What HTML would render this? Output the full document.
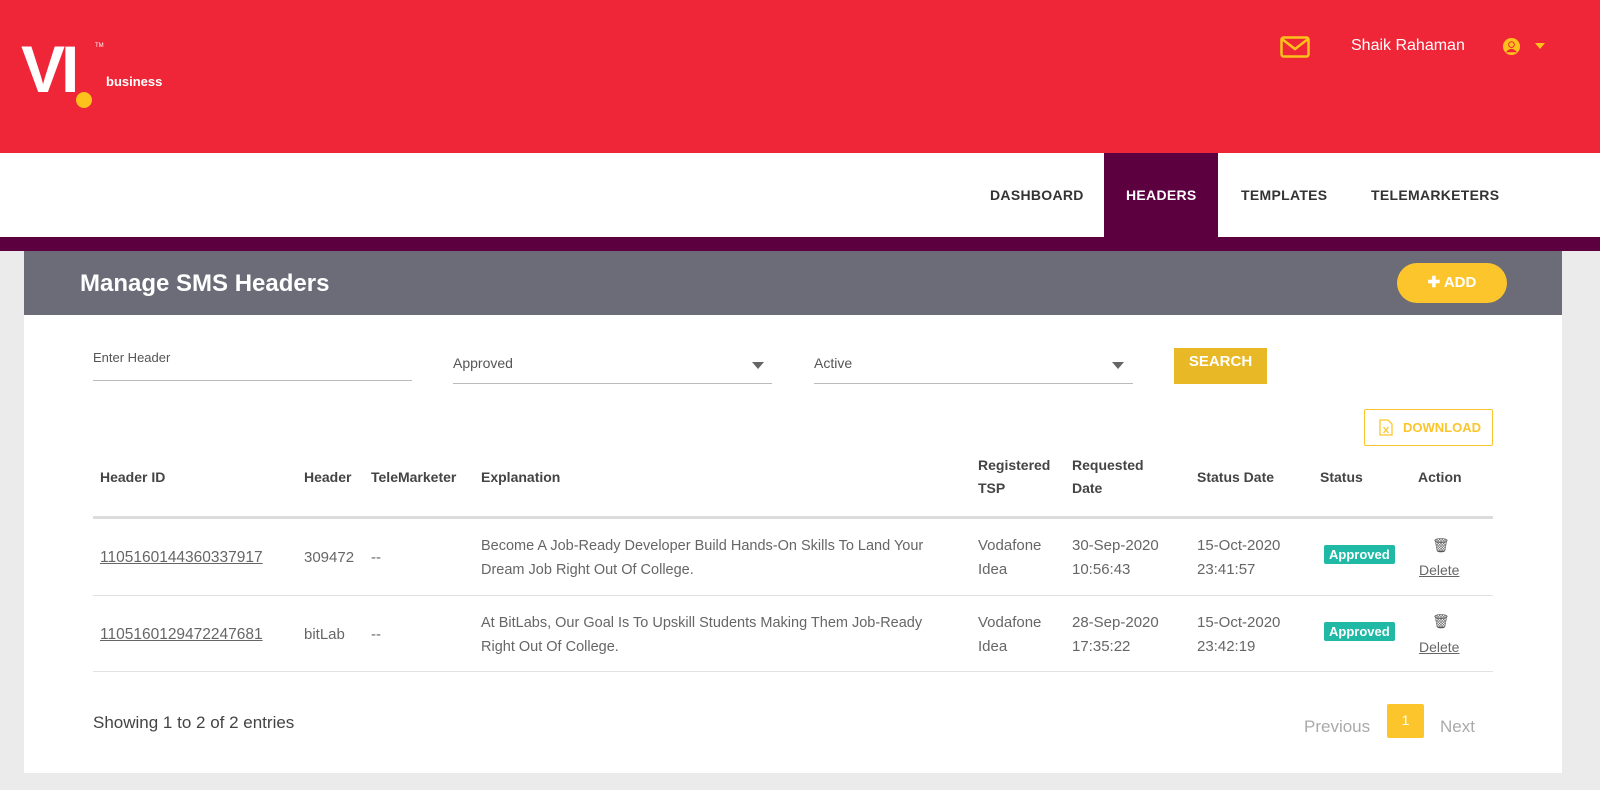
<!DOCTYPE html>
<html><head><meta charset="utf-8"><style>
*{margin:0;padding:0;box-sizing:border-box}
body{width:1600px;height:790px;overflow:hidden;background:#ebebeb;font-family:"Liberation Sans",sans-serif;position:relative;color:#555}
.abs{position:absolute}
#top{left:0;top:0;width:1600px;height:153px;background:#ef2637}
#nav{left:0;top:153px;width:1600px;height:84px;background:#fff}
#bar{left:0;top:237px;width:1600px;height:14px;background:#5d0040}
.nv{position:absolute;top:187px;font-weight:bold;font-size:14px;color:#333;letter-spacing:.3px}
#card{left:24px;top:251px;width:1538px;height:522px;background:#fff}
#ch{left:24px;top:251px;width:1538px;height:64px;background:#6b6c78}
.in{position:absolute;border-bottom:1px solid #bbb;font-size:14px;color:#555}
.th{position:absolute;font-weight:bold;font-size:14px;color:#444;line-height:23px}
.td{position:absolute;font-size:15px;color:#666;line-height:24px}
.badge{position:absolute;background:#1fb9a6;color:#fff;font-weight:bold;font-size:13px;padding:2px 5px;border-radius:2px}
.del{position:absolute;font-size:14px;color:#666;text-decoration:underline}
</style></head><body>
<div id="top" class="abs"></div>
<div class="abs" style="left:21px;top:40px;font-family:'Liberation Sans';font-weight:900;font-size:66px;color:#fff;letter-spacing:-4px;line-height:58px">VI</div>
<div class="abs" style="left:95px;top:43px;font-size:6px;color:#fff">TM</div>
<div class="abs" style="left:76px;top:92px;width:16px;height:16px;border-radius:50%;background:#fcc21b"></div>
<div class="abs" style="left:106px;top:74px;font-size:13px;font-weight:bold;color:#fff">business</div>
<svg class="abs" style="left:1280px;top:36px" width="30" height="22" viewBox="0 0 30 22"><rect x="1.5" y="1.5" width="27" height="19" rx="2" fill="none" stroke="#fcc21b" stroke-width="2.5"/><path d="M2 3 L15 13 L28 3" fill="none" stroke="#fcc21b" stroke-width="2.5"/></svg>
<div class="abs" style="left:1351px;top:37px;font-size:16px;color:#fff">Shaik Rahaman</div>
<svg class="abs" style="left:1502px;top:37px" width="19" height="19" viewBox="0 0 20 20"><circle cx="10" cy="10" r="9" fill="#fcc21b"/><circle cx="10" cy="8" r="3.5" fill="#ef2637"/><path d="M4 16 Q10 9 16 16" fill="#ef2637"/><circle cx="10" cy="8" r="2.5" fill="#fcc21b"/></svg>
<div class="abs" style="left:1535px;top:43px;width:0;height:0;border-left:5px solid transparent;border-right:5px solid transparent;border-top:6px solid #fcc21b"></div>
<div id="nav" class="abs"></div>
<div class="abs" style="left:1104px;top:153px;width:114px;height:84px;background:#5d0040"></div>
<div class="nv" style="left:990px">DASHBOARD</div>
<div class="nv" style="left:1126px;color:#fff">HEADERS</div>
<div class="nv" style="left:1241px">TEMPLATES</div>
<div class="nv" style="left:1371px">TELEMARKETERS</div>
<div id="bar" class="abs"></div>
<div id="card" class="abs"></div>
<div id="ch" class="abs"></div>
<div class="abs" style="left:80px;top:270px;font-size:24px;font-weight:bold;color:#fff">Manage SMS Headers</div>
<div class="abs" style="left:1397px;top:263px;width:110px;height:40px;border-radius:20px;background:#fcc52b;color:#fff;font-weight:bold;font-size:15px;line-height:40px;text-align:center">✚ ADD</div>
<div class="in" style="left:93px;top:350px;width:319px;height:31px;font-size:13px">Enter Header</div>
<div class="in" style="left:453px;top:355px;width:319px;height:29px">Approved</div>
<div class="abs" style="left:752px;top:362px;border-left:6px solid transparent;border-right:6px solid transparent;border-top:7px solid #666"></div>
<div class="in" style="left:814px;top:355px;width:319px;height:29px">Active</div>
<div class="abs" style="left:1112px;top:362px;border-left:6px solid transparent;border-right:6px solid transparent;border-top:7px solid #666"></div>
<div class="abs" style="left:1174px;top:348px;width:93px;height:36px;background:#e8b826;color:#fff;font-weight:bold;font-size:15px;text-align:center;line-height:28px">SEARCH</div>
<div class="abs" style="left:1364px;top:409px;width:129px;height:37px;border:1px solid #fcc52b;border-radius:2px;color:#fcc52b;font-weight:bold;font-size:13px;line-height:35px;padding-left:38px">DOWNLOAD</div>
<svg class="abs" style="left:1379px;top:419px" width="14" height="17" viewBox="0 0 14 17"><path d="M1 1H9L13 5V16H1Z" fill="none" stroke="#fcc52b" stroke-width="1.3"/><path d="M4.5 8L9.5 14M9.5 8L4.5 14" stroke="#fcc52b" stroke-width="1.3"/></svg>
<div class="th" style="left:100px;top:466px">Header ID</div>
<div class="th" style="left:304px;top:466px">Header</div>
<div class="th" style="left:371px;top:466px">TeleMarketer</div>
<div class="th" style="left:481px;top:466px">Explanation</div>
<div class="th" style="left:978px;top:454px">Registered<br>TSP</div>
<div class="th" style="left:1072px;top:454px">Requested<br>Date</div>
<div class="th" style="left:1197px;top:466px">Status Date</div>
<div class="th" style="left:1320px;top:466px">Status</div>
<div class="th" style="left:1418px;top:466px">Action</div>
<div class="abs" style="left:93px;top:516px;width:1400px;height:3px;background:#dcdcdc"></div>
<div class="abs" style="left:93px;top:595px;width:1400px;height:1px;background:#e2e2e2"></div>
<div class="abs" style="left:93px;top:671px;width:1400px;height:1px;background:#e2e2e2"></div>
<div class="td" style="left:100px;top:546px;text-decoration:underline;font-size:15.5px">1105160144360337917</div>
<div class="td" style="left:304px;top:546px">309472</div>
<div class="td" style="left:371px;top:546px">--</div>
<div class="td" style="left:481px;top:534px;font-size:14.5px">Become A Job-Ready Developer Build Hands-On Skills To Land Your<br>Dream Job Right Out Of College.</div>
<div class="td" style="left:978px;top:534px">Vodafone<br>Idea</div>
<div class="td" style="left:1072px;top:534px">30-Sep-2020<br>10:56:43</div>
<div class="td" style="left:1197px;top:534px">15-Oct-2020<br>23:41:57</div>
<div class="badge" style="left:1324px;top:545px">Approved</div>
<div class="abs" style="left:1432px;top:537px;font-size:14px;color:#555">🗑</div>
<div class="del" style="left:1419px;top:562px">Delete</div>
<div class="td" style="left:100px;top:623px;text-decoration:underline;font-size:15.5px">1105160129472247681</div>
<div class="td" style="left:304px;top:623px">bitLab</div>
<div class="td" style="left:371px;top:623px">--</div>
<div class="td" style="left:481px;top:611px;font-size:14.5px">At BitLabs, Our Goal Is To Upskill Students Making Them Job-Ready<br>Right Out Of College.</div>
<div class="td" style="left:978px;top:611px">Vodafone<br>Idea</div>
<div class="td" style="left:1072px;top:611px">28-Sep-2020<br>17:35:22</div>
<div class="td" style="left:1197px;top:611px">15-Oct-2020<br>23:42:19</div>
<div class="badge" style="left:1324px;top:622px">Approved</div>
<div class="abs" style="left:1432px;top:613px;font-size:14px;color:#555">🗑</div>
<div class="del" style="left:1419px;top:639px">Delete</div>
<div class="abs" style="left:93px;top:713px;font-size:17px;color:#444">Showing 1 to 2 of 2 entries</div>
<div class="abs" style="left:1304px;top:717px;font-size:17px;color:#aaa">Previous</div>
<div class="abs" style="left:1387px;top:704px;width:37px;height:34px;background:#fcc52b;color:#fff;font-size:14px;text-align:center;line-height:32px;border-radius:2px">1</div>
<div class="abs" style="left:1440px;top:717px;font-size:17px;color:#aaa">Next</div>
</body></html>
